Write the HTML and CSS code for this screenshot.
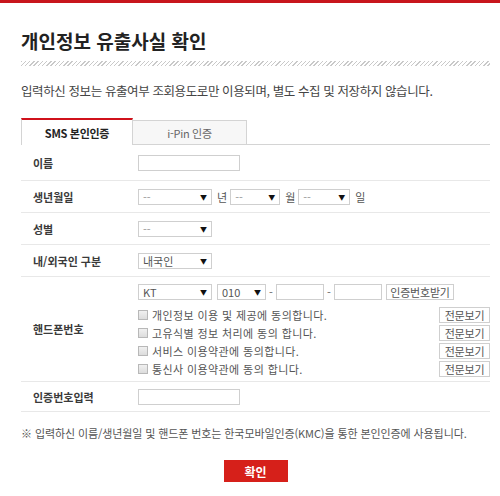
FILE: index.html
```html
<!DOCTYPE html>
<html lang="ko">
<head>
<meta charset="utf-8">
<title>개인정보 유출사실 확인</title>
<link rel="stylesheet" href="styles.css">
</head>
<body>
<div class="topbar"></div>
<div class="wrap">
  <h1 class="title">개인정보 유출사실 확인</h1>
  <div class="hatch"></div>
  <p class="desc">입력하신 정보는 유출여부 조회용도로만 이용되며, 별도 수집 및 저장하지 않습니다.</p>

  <div class="tabs">
    <div class="tab active">SMS 본인인증</div>
    <div class="tab">i-Pin 인증</div>
    <div class="tab-rest"></div>
  </div>

  <div class="form">
    <div class="row r1">
      <div class="label">이름</div>
      <div class="field"><span class="input w102"></span></div>
    </div>
    <div class="row">
      <div class="label">생년월일</div>
      <div class="field">
        <span class="sel w74"><span class="val">--</span><span class="arr">▼</span></span>
        <span class="unit">년</span>
        <span class="sel w50"><span class="val">--</span><span class="arr">▼</span></span>
        <span class="unit">월</span>
        <span class="sel w52"><span class="val">--</span><span class="arr">▼</span></span>
        <span class="unit">일</span>
      </div>
    </div>
    <div class="row">
      <div class="label">성별</div>
      <div class="field"><span class="sel w74"><span class="val">--</span><span class="arr">▼</span></span></div>
    </div>
    <div class="row">
      <div class="label">내/외국인 구분</div>
      <div class="field"><span class="sel w74"><span class="val dark">내국인</span><span class="arr">▼</span></span></div>
    </div>
    <div class="row phone">
      <div class="label">핸드폰번호</div>
      <div class="field col">
        <div class="line">
          <span class="sel w74"><span class="val dark">KT</span><span class="arr">▼</span></span>
          <span class="sel w49 gap6"><span class="val dark">010</span><span class="arr">▼</span></span>
          <span class="dash">-</span>
          <span class="input w48"></span>
          <span class="dash">-</span>
          <span class="input w48"></span>
          <span class="btn w68">인증번호받기</span>
        </div>
        <div class="checks">
          <div class="check"><span class="box"></span><span class="ctext">개인정보 이용 및 제공에 동의합니다.</span><span class="btn view">전문보기</span></div>
          <div class="check"><span class="box"></span><span class="ctext">고유식별 정보 처리에 동의 합니다.</span><span class="btn view">전문보기</span></div>
          <div class="check"><span class="box"></span><span class="ctext">서비스 이용약관에 동의합니다.</span><span class="btn view">전문보기</span></div>
          <div class="check"><span class="box"></span><span class="ctext">통신사 이용약관에 동의 합니다.</span><span class="btn view">전문보기</span></div>
        </div>
      </div>
    </div>
    <div class="row last">
      <div class="label">인증번호입력</div>
      <div class="field"><span class="input w102"></span></div>
    </div>
  </div>

  <p class="note">※ 입력하신 이름/생년월일 및 핸드폰 번호는 한국모바일인증(KMC)을 통한 본인인증에 사용됩니다.</p>

  <div class="actions"><span class="confirm">확인</span></div>
</div>
</body>
</html>
```

FILE: styles.css
```css
* { box-sizing: border-box; }
html, body { margin: 0; padding: 0; background: #fff; }
body {
  font-family: "Noto Sans CJK KR", "Noto Sans", "Liberation Sans", sans-serif;
  color: #333;
}
.topbar { height: 3px; background: #c8161d; }
.wrap { padding: 0 10px 0 21px; }

.title {
  margin: 26px 0 0;
  font-size: 19px;
  line-height: 24px;
  font-weight: 700;
  color: #222;
  letter-spacing: 0;
}
.hatch {
  margin-top: 8px;
  height: 5px;
  background: repeating-linear-gradient(135deg, #c9c9c9 0 1px, #fff 1px 3px);
}
.desc {
  margin: 17px 0 0;
  font-size: 12.5px;
  line-height: 16px;
  color: #444;
  letter-spacing: -0.4px;
}

.tabs {
  margin-top: 19px;
  display: flex;
  align-items: flex-end;
  height: 27px;
}
.tab {
  height: 25px;
  width: 114px;
  display: flex;
  align-items: center;
  justify-content: center;
  font-size: 11px;
  color: #666;
  background: #f7f7f7;
  border: 1px solid #d4d4d4;
  border-left: none;
  letter-spacing: -0.3px;
}
.tab.active {
  width: 112px;
  height: 27px;
  background: #fff;
  border: 1px solid #d4d4d4;
  border-top: 2px solid #d0111b;
  border-bottom: none;
  color: #222;
  font-weight: 700;
}
.tab-rest {
  flex: 1;
  height: 1px;
  background: #d4d4d4;
}

.row {
  display: grid;
  grid-template-columns: 117px 1fr;
  align-items: center;
  height: 32px;
  border-bottom: 1px solid #e8e8e8;
}
.row.r1 { height: 36px; }
.row.phone { height: 105px; }
.row.last { height: 30px; }
.label {
  padding-left: 12px;
  font-size: 11px;
  font-weight: 700;
  color: #3a3a3a;
}
.field {
  display: flex;
  align-items: center;
  font-size: 11px;
  color: #555;
}
.field.col {
  flex-direction: column;
  align-items: stretch;
  padding: 7px 0 4px;
  height: 100%;
}
.line { display: flex; align-items: center; height: 16px; }

.input {
  display: inline-block;
  height: 16px;
  border: 1px solid #cfcfcf;
  background: #fff;
}
.w102 { width: 102px; }
.w48 { width: 48px; }

.sel {
  display: inline-flex;
  align-items: center;
  justify-content: space-between;
  height: 16px;
  border: 1px solid #cfcfcf;
  background: #fff;
  padding: 0 4px 0 4px;
  font-size: 11px;
}
.w74 { width: 74px; }
.w50 { width: 50px; }
.w49 { width: 49px; }
.w52 { width: 52px; }
.gap6 { margin-left: 5px; }
.val { color: #999; line-height: 14px; }
.val.dark { color: #555; }
.arr { font-size: 7px; color: #111; line-height: 14px; }
.unit { margin: 0 3px 0 5px; color: #555; font-size: 11px; }
.dash { width: 10px; text-align: center; color: #666; font-size: 11px; }

.btn {
  display: inline-flex;
  align-items: center;
  justify-content: center;
  height: 16px;
  border: 1px solid #cfcfcf;
  background: #fff;
  color: #555;
  font-size: 11px;
  letter-spacing: -0.2px;
}
.w68 { width: 68px; margin-left: 4px; }

.checks {
  margin-top: 7px;
  display: flex;
  flex-direction: column;
  gap: 2px;
}
.check {
  display: flex;
  align-items: center;
  height: 16px;
}
.box {
  width: 10px;
  height: 10px;
  border: 1px solid #b8b8b8;
  background: linear-gradient(#f0f0f0, #dcdcdc);
  margin-right: 4px;
}
.ctext { flex: 1; color: #555; font-size: 11px; letter-spacing: 0.4px; }
.view { width: 51px; }

.note {
  margin: 14px 0 0;
  font-size: 11px;
  line-height: 14px;
  color: #555;
  letter-spacing: -0.1px;
}
.actions {
  margin-top: 20px;
  display: flex;
  justify-content: center;
}
.confirm {
  display: inline-flex;
  align-items: center;
  justify-content: center;
  width: 64px;
  height: 22px;
  background: #d6201a;
  color: #fff;
  font-size: 12px;
  font-weight: 700;
}
```
